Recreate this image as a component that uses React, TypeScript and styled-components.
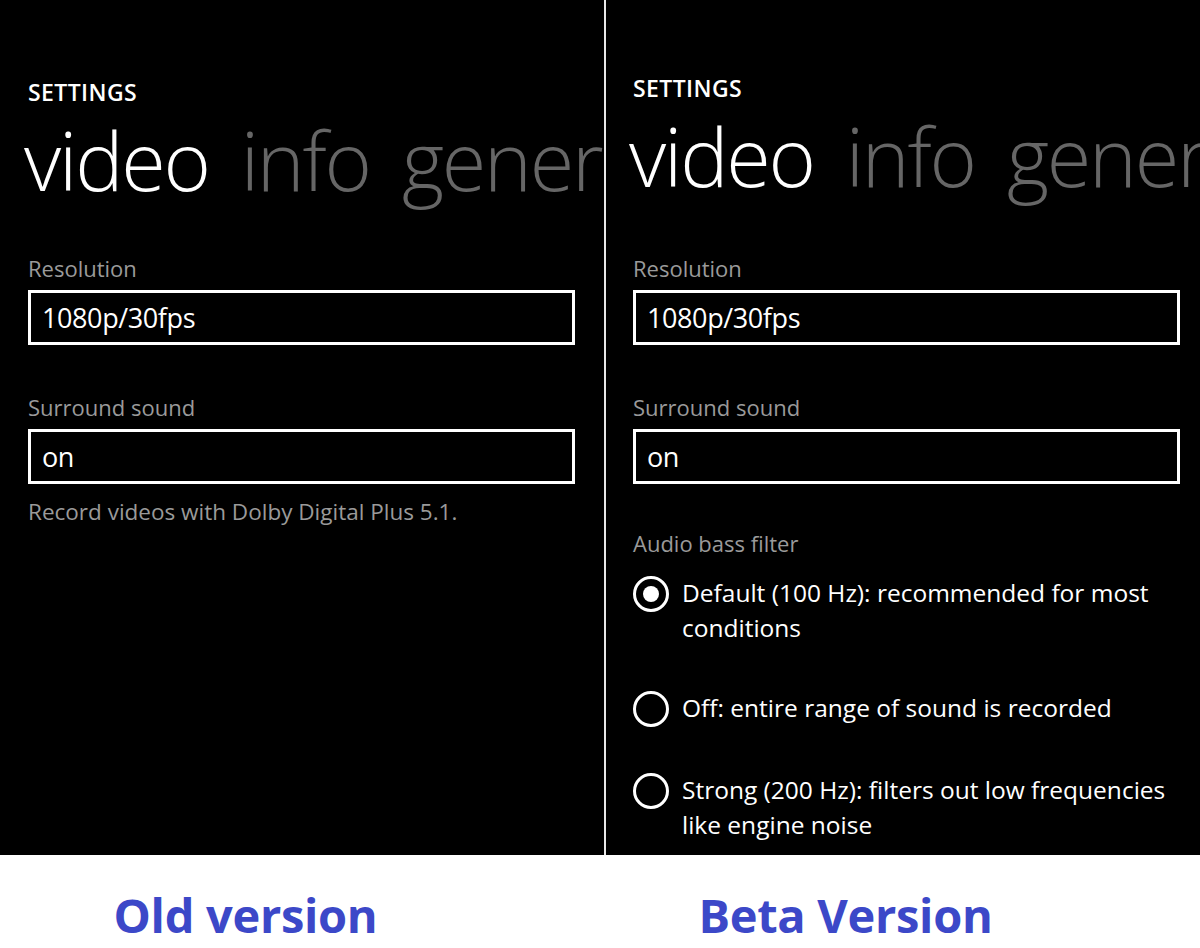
import React from "react";
import styled, { createGlobalStyle } from "styled-components";

const Global = createGlobalStyle`
  html, body { margin: 0; padding: 0; background: #fff; overflow: hidden; }
  body { font-family: "Open Sans", "Noto Sans", sans-serif; }
`;

const Page = styled.div`
  width: 1200px; height: 948px; display: flex; flex-direction: column; overflow: hidden;
`;
const Screens = styled.div`
  display: flex; height: 855px; background: #000;
`;
const Panel = styled.div<{ $w: number; $divider?: boolean; $top: number }>`
  width: ${p => p.$w}px; flex: none; box-sizing: border-box; overflow: hidden;
  padding: ${p => p.$top}px 0 0 ${p => (p.$divider ? 27 : 28)}px;
  border-left: ${p => (p.$divider ? "2px solid #e8e8e8" : "none")};
  color: #fff;
`;
const Title = styled.div`
  font-size: 23px; font-weight: 600; letter-spacing: 0.4px; line-height: 28px;
`;
const Pivot = styled.div`
  display: flex; gap: 32px; white-space: nowrap; margin-left: -4px;
  font-size: 81px; font-weight: 300; line-height: 96px; letter-spacing: -2.2px; margin-top: 6px;
`;
const PivotItem = styled.span<{ $active?: boolean }>`
  color: ${p => (p.$active ? "#fff" : "#666")};
`;
const Label = styled.div<{ $mt: number }>`
  color: #9a9a9a; font-size: 22px; line-height: 28px; margin-top: ${p => p.$mt}px; letter-spacing: 0;
`;
const Box = styled.div`
  width: 547px; height: 55px; box-sizing: border-box; border: 3px solid #fff; margin-top: 8px;
  font-size: 27px; line-height: 49px; padding-left: 11px; letter-spacing: -0.4px;
`;
const Note = styled.div`
  color: #9a9a9a; font-size: 22.5px; line-height: 28px; margin-top: 14px; letter-spacing: 0;
`;
const Radios = styled.div`
  display: flex; flex-direction: column; gap: 46px; margin-top: 19px;
`;
const Radio = styled.div`
  display: flex; gap: 13px; align-items: flex-start;
`;
const Circle = styled.div<{ $on?: boolean }>`
  width: 36px; height: 36px; flex: none; box-sizing: border-box; border: 3px solid #fff; border-radius: 50%;
  display: flex; align-items: center; justify-content: center;
  &::after { content: ""; width: 16px; height: 16px; border-radius: 50%; background: ${p => (p.$on ? "#fff" : "transparent")}; }
`;
const RadioText = styled.div`
  font-size: 24.5px; line-height: 35px; letter-spacing: 0; margin-top: -1px; width: 505px;
`;
const Captions = styled.div`
  display: flex; flex: 1;
`;
const Caption = styled.div<{ $w: number }>`
  width: ${p => p.$w}px; text-align: center; color: #3c48c8; font-weight: 700;
  font-size: 47px; line-height: 60px; padding-top: 30px; letter-spacing: -0.3px;
`;

const PivotRow = () => (
  <Pivot>
    <PivotItem $active>video</PivotItem>
    <PivotItem>info</PivotItem>
    <PivotItem>general</PivotItem>
  </Pivot>
);

export default function App() {
  return (
    <Page>
      <Global />
      <Screens>
        <Panel $w={604} $top={78}>
          <Title>SETTINGS</Title>
          <PivotRow />
          <Label $mt={46}>Resolution</Label>
          <Box>1080p/30fps</Box>
          <Label $mt={48}>Surround sound</Label>
          <Box>on</Box>
          <Note>Record videos with Dolby Digital Plus 5.1.</Note>
        </Panel>
        <Panel $w={596} $divider $top={74}>
          <Title>SETTINGS</Title>
          <PivotRow />
          <Label $mt={50}>Resolution</Label>
          <Box>1080p/30fps</Box>
          <Label $mt={48}>Surround sound</Label>
          <Box>on</Box>
          <Label $mt={45}>Audio bass filter</Label>
          <Radios>
            <Radio><Circle $on /><RadioText>Default (100 Hz): recommended for most conditions</RadioText></Radio>
            <Radio><Circle /><RadioText>Off: entire range of sound is recorded</RadioText></Radio>
            <Radio><Circle /><RadioText>Strong (200 Hz): filters out low frequencies like engine noise</RadioText></Radio>
          </Radios>
        </Panel>
      </Screens>
      <Captions>
        <Caption $w={518}>Old version</Caption>
        <Caption $w={748}>Beta Version</Caption>
      </Captions>
    </Page>
  );
}
